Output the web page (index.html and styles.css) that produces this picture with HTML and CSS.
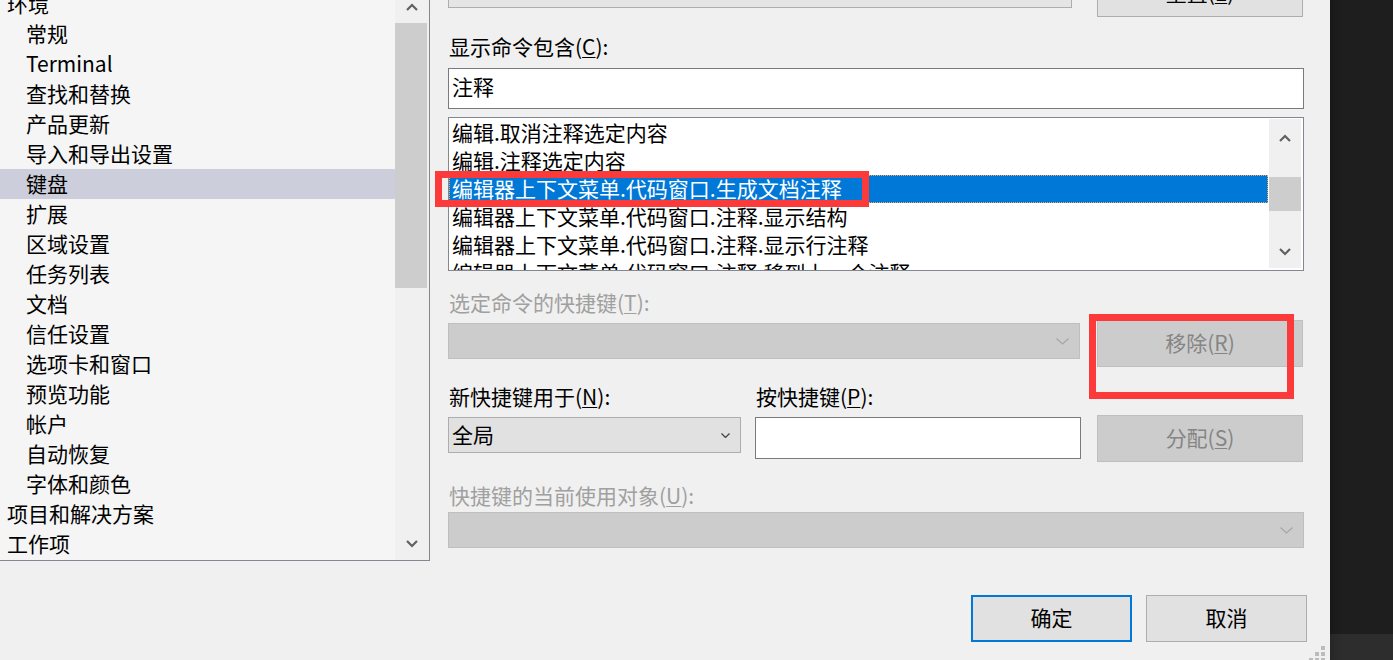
FILE: index.html
```html
<!DOCTYPE html>
<html lang="zh-CN">
<head>
<meta charset="utf-8">
<title>选项 - 键盘</title>
<link rel="stylesheet" href="styles.css">
</head>
<body>
<div class="screen">
  <div class="dialog">
    <div class="main">
      <div class="tree-pane">
        <div class="tree">
          <div class="node">环境</div>
          <div class="node child">常规</div>
          <div class="node child">Terminal</div>
          <div class="node child">查找和替换</div>
          <div class="node child">产品更新</div>
          <div class="node child">导入和导出设置</div>
          <div class="node child sel">键盘</div>
          <div class="node child">扩展</div>
          <div class="node child">区域设置</div>
          <div class="node child">任务列表</div>
          <div class="node child">文档</div>
          <div class="node child">信任设置</div>
          <div class="node child">选项卡和窗口</div>
          <div class="node child">预览功能</div>
          <div class="node child">帐户</div>
          <div class="node child">自动恢复</div>
          <div class="node child">字体和颜色</div>
          <div class="node">项目和解决方案</div>
          <div class="node">工作项</div>
        </div>
        <div class="vscroll tree-scroll">
          <div class="sb-btn up"><svg class="chev" viewBox="0 0 12 8"><polyline points="1,7 6,2 11,7"/></svg></div>
          <div class="sb-thumb"></div>
          <div class="sb-track"></div>
          <div class="sb-btn down"><svg class="chev" viewBox="0 0 12 8"><polyline points="1,1 6,6 11,1"/></svg></div>
        </div>
      </div>

      <div class="form">
        <div class="row top-row">
          <div class="top-field"></div>
          <div class="btn">重置(<u>E</u>)</div>
        </div>

        <div class="label lbl-contains">显示命令包含(<u>C</u>):</div>
        <div class="textbox filter">注释</div>

        <div class="listbox">
          <div class="items">
            <div class="item">编辑.取消注释选定内容</div>
            <div class="item">编辑.注释选定内容</div>
            <div class="item sel">编辑器上下文菜单.代码窗口.生成文档注释</div>
            <div class="item">编辑器上下文菜单.代码窗口.注释.显示结构</div>
            <div class="item">编辑器上下文菜单.代码窗口.注释.显示行注释</div>
            <div class="item">编辑器上下文菜单.代码窗口.注释.移到上一个注释</div>
          </div>
          <div class="vscroll list-scroll">
            <div class="sb-btn up"><svg class="chev" viewBox="0 0 12 8"><polyline points="1,7 6,2 11,7"/></svg></div>
            <div class="sb-track pre"></div>
            <div class="sb-thumb"></div>
            <div class="sb-track"></div>
            <div class="sb-btn down"><svg class="chev" viewBox="0 0 12 8"><polyline points="1,1 6,6 11,1"/></svg></div>
          </div>
        </div>

        <div class="label disabled lbl-current">选定命令的快捷键(<u>T</u>):</div>
        <div class="row row-current">
          <div class="combo disabled wide">
            <span></span>
            <svg class="dd big" viewBox="0 0 13 7"><polyline points="0.5,0.5 6.5,6 12.5,0.5"/></svg>
          </div>
          <div class="btn disabled">移除(<u>R</u>)</div>
        </div>

        <div class="row labels-row">
          <div class="label scope-lbl">新快捷键用于(<u>N</u>):</div>
          <div class="label">按快捷键(<u>P</u>):</div>
        </div>
        <div class="row row-new">
          <div class="combo scope">
            <span>全局</span>
            <svg class="dd small" viewBox="0 0 9 5"><polyline points="0.5,0.5 4.5,4.5 8.5,0.5"/></svg>
          </div>
          <div class="textbox keys"></div>
          <div class="btn disabled">分配(<u>S</u>)</div>
        </div>

        <div class="label disabled lbl-used">快捷键的当前使用对象(<u>U</u>):</div>
        <div class="combo disabled full">
          <span></span>
          <svg class="dd big" viewBox="0 0 13 7"><polyline points="0.5,0.5 6.5,6 12.5,0.5"/></svg>
        </div>
      </div>
    </div>

    <div class="footer">
      <div class="btn dlg default">确定</div>
      <div class="btn dlg">取消</div>
    </div>

    <div class="annot annot-row"></div>
    <div class="annot annot-btn"></div>

    <svg class="grip" viewBox="0 0 16 14">
      <rect x="12" y="0" width="4" height="4"/>
      <rect x="6" y="6" width="4" height="4"/>
      <rect x="12" y="6" width="4" height="4"/>
      <rect x="0" y="12" width="4" height="4"/>
      <rect x="6" y="12" width="4" height="4"/>
      <rect x="12" y="12" width="4" height="4"/>
    </svg>
  </div>
  <div class="side">
    <div class="side-top"></div>
    <div class="side-bottom"></div>
  </div>
</div>
</body>
</html>
```

FILE: styles.css
```css
* { box-sizing: border-box; }

body {
  margin: 0;
  background: #1e1e1e;
  font-family: "Noto Sans CJK SC", "Noto Sans", sans-serif;
  font-size: 21px;
  color: #000;
}

u { text-decoration-thickness: 1px; text-underline-offset: 2px; }

.screen {
  display: flex;
  width: 1393px;
  height: 660px;
  overflow: hidden;
}

.dialog {
  position: relative;
  flex: none;
  width: 1330px;
  height: 660px;
  background: #f0f0f0;
  display: flex;
  flex-direction: column;
}

.main {
  display: flex;
  height: 561px;
  flex: none;
}

/* ---------- tree ---------- */
.tree-pane {
  width: 430px;
  height: 561px;
  flex: none;
  display: flex;
  overflow: hidden;
  background: #f5f5f5;
  border-right: 1px solid #828790;
  border-bottom: 1px solid #828790;
}

.tree {
  width: 395px;
  flex: none;
  margin-top: -11px;
}

.node {
  height: 30px;
  line-height: 28px;
  padding-bottom: 2px;
  padding-left: 7px;
  white-space: nowrap;
}
.node.child { padding-left: 26px; }
.node.sel { background: #cccedb; }

/* ---------- scrollbars ---------- */
.vscroll {
  display: flex;
  flex-direction: column;
  background: #f0f0f0;
}
.sb-btn {
  display: flex;
  align-items: center;
  justify-content: center;
  flex: none;
}
.sb-thumb { background: #cdcdcd; flex: none; }
.sb-track { flex: 1; }

.chev {
  width: 12px;
  height: 8px;
  fill: none;
  stroke: #606060;
  stroke-width: 2.2;
}

.tree-scroll { width: 34px; flex: none; }
.tree-scroll .sb-btn.up { margin-top: -10px; height: 33px; }
.tree-scroll .sb-thumb { height: 265px; margin-right: 2px; }
.tree-scroll .sb-btn.down { height: 33px; }

/* ---------- form ---------- */
.form {
  margin-left: 18px;
  width: 856px;
  display: flex;
  flex-direction: column;
}

.row { display: flex; align-items: flex-start; }

.top-row { margin-top: -30px; gap: 25px; height: 47px; }
.top-field {
  width: 624px;
  height: 38px;
  background: #e5e5e5;
  border: 1px solid #adadad;
}

.label {
  height: 30px;
  line-height: 28px;
  padding-bottom: 2px;
  padding-left: 1px;
  white-space: nowrap;
}
.label.disabled { color: #a0a0a0; }

.lbl-contains { margin-top: 15px; }

.textbox {
  background: #fff;
  border: 1px solid #7a7a7a;
  padding-left: 3px;
}
.filter {
  margin-top: 6px;
  height: 41px;
  line-height: 35px;
  padding-bottom: 4px;
}

.listbox {
  margin-top: 8px;
  height: 154px;
  background: #fff;
  border: 1px solid #828790;
  display: flex;
}
.items {
  flex: 1;
  padding-top: 1px;
  overflow: hidden;
}
.item {
  height: 28px;
  line-height: 26px;
  padding-bottom: 2px;
  padding-left: 3px;
  white-space: nowrap;
}
.item.sel {
  background: #0078d7;
  color: #fff;
  outline: 1px dotted #f2a65e;
  outline-offset: -1px;
}
.list-scroll {
  width: 32px;
  flex: none;
  margin: 1px 2px 2px 1px;
}
.list-scroll .sb-btn.up { height: 38px; }
.list-scroll .sb-track.pre { flex: none; height: 20px; }
.list-scroll .sb-thumb { height: 34px; }
.list-scroll .sb-btn.down { height: 32px; }

.lbl-current { margin-top: 17px; }

.row-current { margin-top: 2px; gap: 17px; height: 47px; }

.combo {
  height: 36px;
  background: #e1e1e1;
  border: 1px solid #adadad;
  display: flex;
  align-items: center;
  justify-content: space-between;
  padding: 0 10px 0 3px;
  line-height: 32px;
}
.combo span { padding-bottom: 2px; }
.combo.disabled {
  background: #cccccc;
  border-color: #bfbfbf;
}
.combo.wide { width: 632px; margin-top: 3px; }
.combo.scope { width: 293px; margin-top: 2px; padding-right: 10px; }
.combo.full { width: 856px; margin-top: 1px; }

.dd { fill: none; stroke-width: 1.2; }
.dd.small { width: 9px; height: 5px; stroke: #404040; }
.dd.big { width: 13px; height: 7px; stroke: #a6a6a6; }

.labels-row { margin-top: 15px; }
.scope-lbl { width: 307px; }

.row-new { margin-top: 3px; height: 47px; }
.keys {
  width: 326px;
  height: 42px;
  margin-top: 2px;
  margin-left: 14px;
  margin-right: 16px;
}

.lbl-used { margin-top: 19px; }

/* ---------- buttons ---------- */
.btn {
  width: 206px;
  height: 47px;
  flex: none;
  background: #e1e1e1;
  border: 1px solid #adadad;
  display: flex;
  align-items: center;
  justify-content: center;
  padding-bottom: 3px;
  white-space: nowrap;
}
.btn.disabled {
  background: #cccccc;
  border-color: #bfbfbf;
  color: #858585;
}

.footer {
  margin-top: 34px;
  display: flex;
  justify-content: flex-end;
  gap: 14px;
  padding-right: 23px;
}
.btn.dlg { width: 161px; }
.btn.default { border: 2px solid #0078d7; }

/* ---------- overlays ---------- */
.annot {
  position: absolute;
  border: 7px solid #fd3a3a;
}
.annot-row { left: 435px; top: 171px; width: 434px; height: 36px; }
.annot-btn { left: 1089px; top: 314px; width: 205px; height: 85px; }

.grip {
  position: absolute;
  left: 1309px;
  top: 646px;
  width: 16px;
  height: 14px;
  fill: #bcbcbc;
}

/* ---------- right dark strip ---------- */
.side {
  flex: 1;
  display: flex;
  flex-direction: column;
}
.side-top {
  height: 634px;
  background: linear-gradient(to right, #181818 0, #1e1e1e 12px);
}
.side-bottom {
  flex: 1;
  background: linear-gradient(to right, #262626 0, #2d2d2d 12px);
}
```
